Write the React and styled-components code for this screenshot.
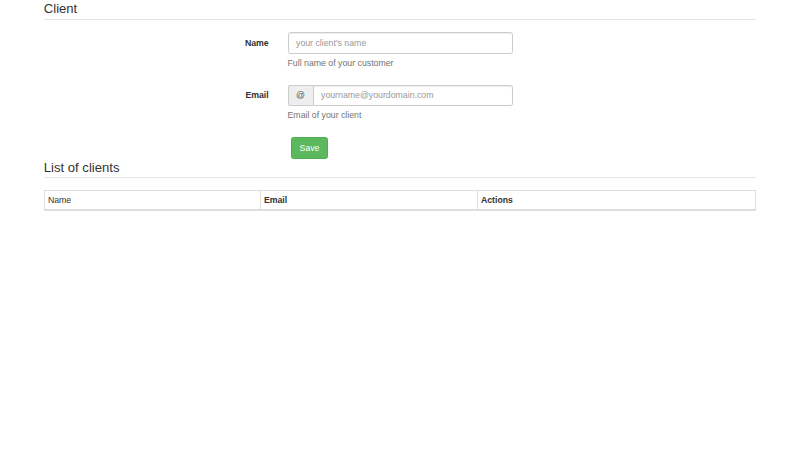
import React from "react";
import styled, { createGlobalStyle } from "styled-components";

const GlobalStyle = createGlobalStyle`
  * { box-sizing: border-box; }
  html, body { margin: 0; padding: 0; background: #fff; }
  body {
    font-family: "Liberation Sans", Arial, Helvetica, sans-serif;
    font-size: 8.75px;
    line-height: 12.5px;
    color: #333;
  }
`;

const Container = styled.div`
  width: 712.5px;
  margin: 0 auto;
`;

const Fieldset = styled.fieldset`
  margin: 0;
  padding: 0;
  border: 0;
  min-width: 0;
`;

const Legend = styled.legend`
  display: block;
  width: 100%;
  padding: 0;
  margin: 0 0 ${(p) => p.$mb || "12.5px"} 0;
  font-size: 13.125px;
  font-weight: normal;
  line-height: 18.75px;
  color: #333;
  border: 0;
  border-bottom: 1px solid #e5e5e5;
`;

const FormGroup = styled.div`
  display: grid;
  grid-template-columns: 225px 225px;
  column-gap: 18.75px;
  margin-bottom: ${(p) => (p.$last ? "0" : "9.375px")};
`;

const Label = styled.label`
  text-align: right;
  padding-top: 4.375px;
  font-weight: bold;
  line-height: 12.5px;
`;

const Field = styled.div`
  grid-column: ${(p) => (p.$offset ? "2" : "auto")};
  display: flex;
  flex-direction: column;
`;

const Input = styled.input`
  display: block;
  width: 100%;
  height: 21.25px;
  padding: 3.75px 7.5px;
  font-family: inherit;
  font-size: 8.75px;
  line-height: 12.5px;
  color: #555;
  background: #fff;
  border: 1px solid #ccc;
  border-radius: ${(p) => (p.$grouped ? "0 2.5px 2.5px 0" : "2.5px")};
  box-shadow: inset 0 1px 1px rgba(0, 0, 0, 0.075);
  outline: none;
  &::placeholder { color: #999; }
`;

const InputGroup = styled.div`
  display: flex;
  width: 100%;
`;

const Addon = styled.span`
  display: flex;
  align-items: center;
  justify-content: center;
  width: 25px;
  height: 21.25px;
  flex: none;
  font-size: 8.75px;
  color: #555;
  background: #eee;
  border: 1px solid #ccc;
  border-right: 0;
  border-radius: 2.5px 0 0 2.5px;
`;

const Help = styled.span`
  display: block;
  margin: 3.125px 0 6.25px;
  color: #737373;
  line-height: 12.5px;
`;

const Button = styled.button`
  align-self: flex-start;
  margin-left: 3.5px;
  height: 21.25px;
  padding: 3.75px 7.5px;
  font-family: inherit;
  font-size: 8.75px;
  line-height: 12.5px;
  color: #fff;
  background: #5cb85c;
  border: 1px solid #4cae4c;
  border-radius: 2.5px;
  cursor: pointer;
`;

const Table = styled.table`
  width: 100%;
  border-collapse: collapse;
  border-spacing: 0;
  border: 1px solid #ddd;
  margin-bottom: 12.5px;
`;

const Th = styled.th`
  text-align: left;
  padding: 2.75px 3.125px;
  line-height: 12.5px;
  font-weight: ${(p) => (p.$plain ? "normal" : "bold")};
  border: 1px solid #ddd;
  border-bottom: 2px solid #ddd;
  vertical-align: bottom;
`;

export default function App() {
  return (
    <>
      <GlobalStyle />
      <Container>
        <form onSubmit={(e) => e.preventDefault()}>
          <Fieldset>
            <Legend>Client</Legend>
            <FormGroup>
              <Label htmlFor="name">Name</Label>
              <Field>
                <Input id="name" placeholder="your client's name" />
                <Help>Full name of your customer</Help>
              </Field>
            </FormGroup>
            <FormGroup>
              <Label htmlFor="email">Email</Label>
              <Field>
                <InputGroup>
                  <Addon>@</Addon>
                  <Input id="email" $grouped placeholder="yourname@yourdomain.com" />
                </InputGroup>
                <Help>Email of your client</Help>
              </Field>
            </FormGroup>
            <FormGroup $last>
              <Field $offset>
                <Button type="submit">Save</Button>
              </Field>
            </FormGroup>
          </Fieldset>
        </form>
        <Legend as="h4" $mb="12px">List of clients</Legend>
        <Table>
          <thead>
            <tr>
              <Th $plain style={{ width: "216px" }}>Name</Th>
              <Th style={{ width: "217px" }}>Email</Th>
              <Th>Actions</Th>
            </tr>
          </thead>
          <tbody />
        </Table>
      </Container>
    </>
  );
}
